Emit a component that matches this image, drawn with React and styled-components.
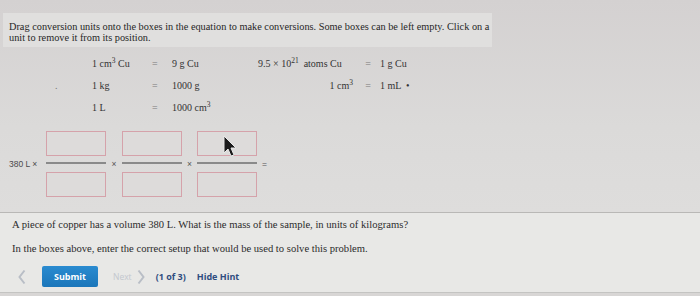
import React from 'react'
import styled, { createGlobalStyle } from 'styled-components'

const Global = createGlobalStyle`
  html, body { margin: 0; padding: 0; }
  body {
    width: 700px;
    height: 296px;
    overflow: hidden;
    background: #d8d6d5;
    font-family: "Liberation Serif", "Times New Roman", serif;
    color: #2a2a2a;
  }
  sup { font-size: 7.5px; vertical-align: 4px; line-height: 0; }
`

const Page = styled.div`
  display: flex;
  flex-direction: column;
  height: 296px;
`

const Top = styled.div`
  display: flex;
  flex-direction: column;
  height: 212px;
  box-sizing: border-box;
  padding-top: 13px;
  background: linear-gradient(180deg, #d4d1d1 0%, #dbdad9 60%, #dedddc 100%);
`

const Instruction = styled.p`
  margin: 0 0 0 3px;
  width: 483px;
  padding: 8px 0 4px 6px;
  background: #e0dfde;
  font-size: 10.3px;
  line-height: 11px;
  color: #262626;
`

const Table = styled.div`
  display: grid;
  grid-template-columns: 42px 60px 20px 86px 98px 24px auto;
  grid-auto-rows: 22px;
  align-items: center;
  margin: 5px 0 0 50px;
  font-size: 10px;
  color: #333;
`

const Cell = styled.span`
  text-align: ${p => p.$align || 'left'};
  white-space: nowrap;
  padding-left: ${p => p.$pl || '0'};
  padding-right: ${p => (p.$align === 'right' ? '3px' : '0')};
`

const Eq = styled.span`
  color: #7a7a7a;
  text-align: ${p => p.$align || 'left'};
`

const Equation = styled.div`
  position: relative;
  display: flex;
  align-items: center;
  margin: 13px 0 0 9px;
  font-family: "Liberation Sans", Arial, sans-serif;
  font-size: 8.5px;
  color: #4a4a4a;
`

const Lead = styled.span`
  width: 37px;
  white-space: nowrap;
`

const Fraction = styled.div`
  display: flex;
  flex-direction: column;
  align-items: center;
  width: 60px;
`

const Box = styled.div`
  width: 58px;
  height: 23px;
  border: 1px solid #d5a2aa;
  background: #dddbda;
`

const Bar = styled.div`
  width: 60px;
  height: 2px;
  background: #8a8a8a;
  margin: 6px 0 8px;
`

const Op = styled.span`
  width: ${p => p.$w || '15px'};
  text-align: center;
  color: #555;
`

const Cursor = styled.svg`
  position: absolute;
  left: 213px;
  top: 4px;
`

const Lower = styled.div`
  flex: 1;
  display: flex;
  flex-direction: column;
  border-top: 1px solid #b9b8b6;
  background: #e8e8e6;
  padding: 5px 0 0 12px;
  box-sizing: border-box;
  border-bottom: 1px solid #c4c4c2;
  margin-bottom: 3px;
`

const Para = styled.p`
  margin: 0 0 ${p => p.$mb || '0'};
  font-size: 10.6px;
  line-height: 13px;
  color: #2b2b2b;
`

const Actions = styled.div`
  display: flex;
  align-items: center;
  margin-top: 11px;
  font-family: "Open Sans", "Liberation Sans", sans-serif;
  font-size: 9px;
  font-weight: 700;
`

const Chevron = styled.svg`
  margin-left: ${p => p.$ml || '0'};
`

const SubmitButton = styled.button`
  margin-left: 16px;
  width: 56px;
  height: 21px;
  border: none;
  border-radius: 2px;
  background: linear-gradient(180deg, #2a8bd0 0%, #1b76ba 100%);
  color: #fff;
  font-family: "Open Sans", "Liberation Sans", sans-serif;
  font-size: 9px;
  font-weight: 700;
  padding: 0;
`

const NextLabel = styled.span`
  margin-left: 15px;
  color: #c3c7ce;
  font-weight: 400;
  font-size: 8.5px;
`

const Link = styled.span`
  margin-left: ${p => p.$ml || '0'};
  color: #2f4d80;
`

const rows = [
  ['', <>1 cm<sup>3</sup> Cu</>, <>9 g Cu</>, <>9.5 × 10<sup>21</sup>&nbsp; atoms Cu</>, <>1 g Cu</>, 'left'],
  ['.', <>1 kg</>, <>1000 g</>, <>1 cm<sup>3</sup></>, <>1 mL &nbsp;•</>, 'right'],
  ['', <>1 L</>, <>1000 cm<sup>3</sup></>, null, null, 'left'],
]

export default function App() {
  return (
    <Page>
      <Global />
      <Top>
        <Instruction>
          Drag conversion units onto the boxes in the equation to make conversions. Some boxes can be left empty. Click on a unit to remove it from its position.
        </Instruction>
        <Table>
          {rows.map(([dot, a, b, c, d, align], i) => (
            <React.Fragment key={i}>
              <Cell $pl="5px" style={{ color: '#777' }}>{dot}</Cell>
              <Cell>{a}</Cell>
              <Eq>=</Eq>
              <Cell>{b}</Cell>
              <Cell $align={align}>{c}</Cell>
              <Eq $align="center">{c ? '=' : ''}</Eq>
              <Cell>{d}</Cell>
            </React.Fragment>
          ))}
        </Table>
        <Equation>
          <Lead>380 L ×</Lead>
          <Fraction><Box /><Bar /><Box /></Fraction>
          <Op $w="16px">×</Op>
          <Fraction><Box /><Bar /><Box /></Fraction>
          <Op>×</Op>
          <Fraction><Box /><Bar /><Box /></Fraction>
          <Op>=</Op>
          <Cursor width="16" height="24" viewBox="0 0 16 24">
            <path d="M2 1 L2 18 L6 14 L9 21 L12 20 L9 13 L14 13 Z" fill="#1b1b1b" stroke="#e8e8e8" strokeWidth="1" />
          </Cursor>
        </Equation>
      </Top>
      <Lower>
        <Para $mb="11px">A piece of copper has a volume 380 L. What is the mass of the sample, in units of kilograms?</Para>
        <Para>In the boxes above, enter the correct setup that would be used to solve this problem.</Para>
        <Actions>
          <Chevron $ml="6px" width="8" height="16" viewBox="0 0 8 16">
            <path d="M6.5 1.5 L1.5 8 L6.5 14.5" fill="none" stroke="#b9bec6" strokeWidth="2" />
          </Chevron>
          <SubmitButton>Submit</SubmitButton>
          <NextLabel>Next</NextLabel>
          <Chevron $ml="5px" width="8" height="16" viewBox="0 0 8 16">
            <path d="M1.5 1.5 L6.5 8 L1.5 14.5" fill="none" stroke="#b9bec6" strokeWidth="2" />
          </Chevron>
          <Link $ml="11px">(1 of 3)</Link>
          <Link $ml="11px">Hide Hint</Link>
        </Actions>
      </Lower>
    </Page>
  )
}
